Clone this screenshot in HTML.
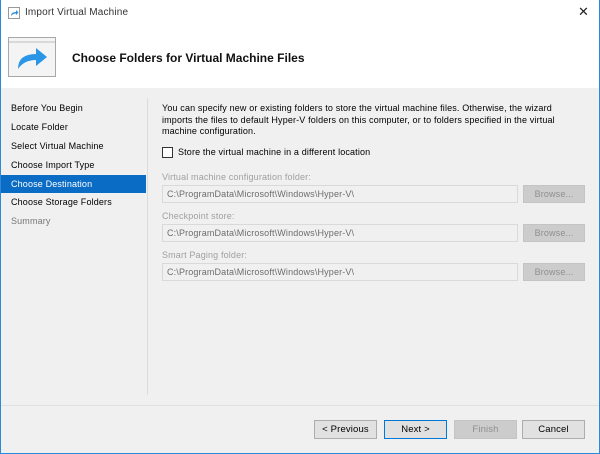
<!DOCTYPE html>
<html><head><style>
*{margin:0;padding:0;box-sizing:border-box}
body{width:600px;height:454px;background:#f0f0f0;font-family:"Liberation Sans",sans-serif;font-size:9px;letter-spacing:.15px;color:#000;position:relative;overflow:hidden}
.a{position:absolute}
.win{left:0;top:0;width:600px;height:454px;border:1px solid #2b8ad8;border-top:none}
.nav{left:11px}
.inp{left:162px;width:356px;height:18px;background:#f0f0f0;border:1px solid #d9d9d9;color:#6d6d6d;padding:3px 4px;font-size:9px;line-height:11px}
.br{left:523px;width:62px;height:18px;background:#cccccc;border:1px solid #c4c4c4;color:#8f8f8f;text-align:center;line-height:16px;font-size:9px}
.lbl{left:162px;color:#a0a0a0}
.btn{top:420px;width:63px;height:19px;background:#e1e1e1;border:1px solid #adadad;text-align:center;line-height:17px;font-size:9.5px}
</style></head><body>
<div class="a" style="left:0;top:0;width:600px;height:88px;background:#fff"></div>
<svg class="a" style="left:8px;top:7px" width="12" height="12" viewBox="0 0 12 12"><rect x=".5" y=".5" width="11" height="11" fill="#fff" stroke="#999"/><path d="M3 9 Q3 5 8 5 L8 3 L10.5 5.5 L8 8 L8 6.5 Q5 6.5 3 9Z" fill="#2d8fe0"/></svg>
<div class="a" style="left:25px;top:7px;font-size:10px;color:#333">Import Virtual Machine</div>
<div class="a" style="left:578px;top:4px;font-size:13px;color:#222">✕</div>
<svg class="a" style="left:8px;top:37px" width="48" height="40" viewBox="0 0 48 40"><rect x=".5" y=".5" width="47" height="39" fill="#f4f4f4" stroke="#a8a8a8"/><line x1="1" y1="5" x2="47" y2="5" stroke="#bbb"/><path d="M10 32 Q10 17 28 17 L28 11 L39 20 L28 29 L28 23 Q16 23 10 32Z" fill="#2b95e6"/></svg>
<div class="a" style="left:72px;top:51px;font-size:12px;font-weight:bold;color:#111;letter-spacing:0">Choose Folders for Virtual Machine Files</div>
<div class="a" style="left:0;top:175px;width:146px;height:18px;background:#0a6cc4"></div>
<div class="a nav" style="top:103px">Before You Begin</div>
<div class="a nav" style="top:122px">Locate Folder</div>
<div class="a nav" style="top:141px">Select Virtual Machine</div>
<div class="a nav" style="top:160px">Choose Import Type</div>
<div class="a nav" style="top:179px;color:#fff">Choose Destination</div>
<div class="a nav" style="top:197px">Choose Storage Folders</div>
<div class="a nav" style="top:216px;color:#777">Summary</div>
<div class="a" style="left:147px;top:98px;width:1px;height:297px;background:#dcdcdc"></div>
<div class="a" style="left:162px;top:103px;width:430px;line-height:11.5px;white-space:nowrap">You can specify new or existing folders to store the virtual machine files. Otherwise, the wizard<br>imports the files to default Hyper-V folders on this computer, or to folders specified in the virtual<br>machine configuration.</div>
<div class="a" style="left:162px;top:147px;width:11px;height:11px;background:#fff;border:1px solid #333"></div>
<div class="a" style="left:178px;top:147px">Store the virtual machine in a different location</div>
<div class="a lbl" style="top:172px">Virtual machine configuration folder:</div>
<div class="a inp" style="top:185px">C:\ProgramData\Microsoft\Windows\Hyper-V\</div>
<div class="a br" style="top:185px">Browse...</div>
<div class="a lbl" style="top:211px">Checkpoint store:</div>
<div class="a inp" style="top:224px">C:\ProgramData\Microsoft\Windows\Hyper-V\</div>
<div class="a br" style="top:224px">Browse...</div>
<div class="a lbl" style="top:250px">Smart Paging folder:</div>
<div class="a inp" style="top:263px">C:\ProgramData\Microsoft\Windows\Hyper-V\</div>
<div class="a br" style="top:263px">Browse...</div>
<div class="a" style="left:1px;top:405px;width:598px;height:1px;background:#e0e0e0"></div>
<div class="a btn" style="left:314px">&lt; Previous</div>
<div class="a btn" style="left:384px;border-color:#0078d7">Next &gt;</div>
<div class="a btn" style="left:454px;background:#ccc;border-color:#c4c4c4;color:#8f8f8f">Finish</div>
<div class="a btn" style="left:522px">Cancel</div>
<div class="a win"></div>
</body></html>
